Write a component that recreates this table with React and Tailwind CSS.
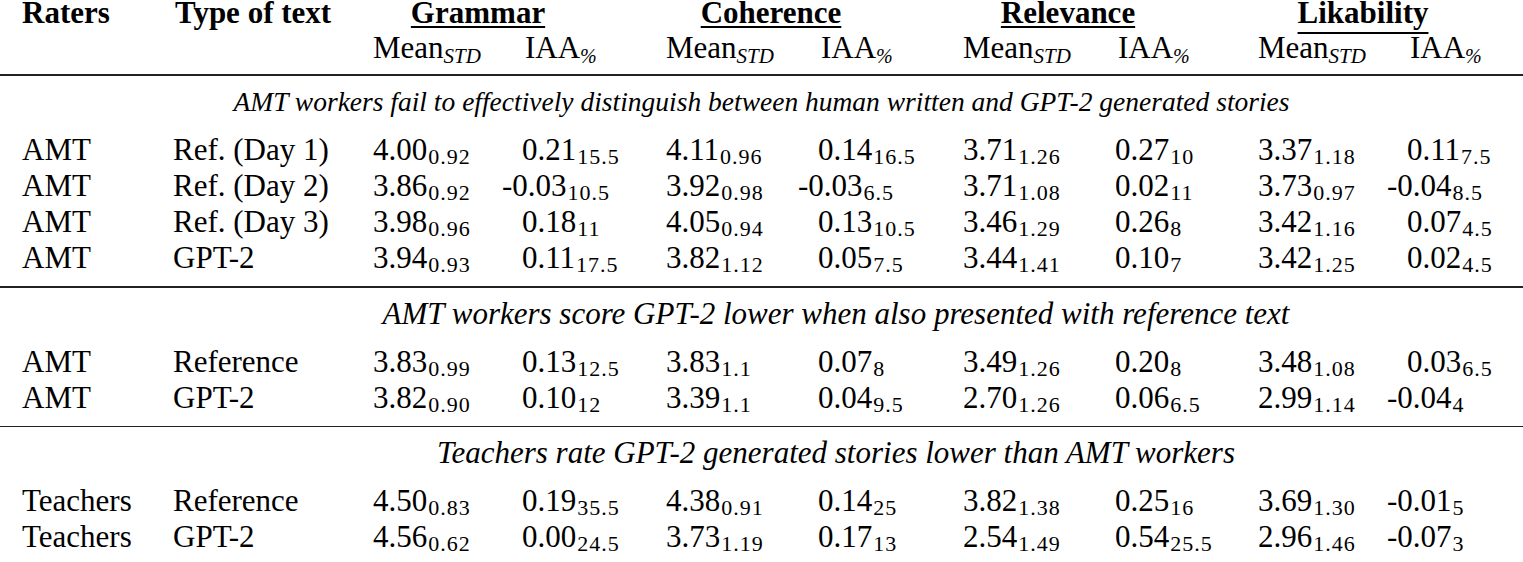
import React from 'react';

const cols = 'grid grid-cols-[173px_200px_149px_144px_152px_145px_152px_143px_149px_116px]';

const groups = ['Grammar', 'Coherence', 'Relevance', 'Likability'];

const sections = [
  {
    caption: 'AMT workers fail to effectively distinguish between human written and GPT-2 generated stories',
    capCls: 'text-[27.5px]',
    rows: [
      ['AMT', 'Ref. (Day 1)', ['4.00', '0.92'], ['0.21', '15.5'], ['4.11', '0.96'], ['0.14', '16.5'], ['3.71', '1.26'], ['0.27', '10'], ['3.37', '1.18'], ['0.11', '7.5']],
      ['AMT', 'Ref. (Day 2)', ['3.86', '0.92'], ['-0.03', '10.5'], ['3.92', '0.98'], ['-0.03', '6.5'], ['3.71', '1.08'], ['0.02', '11'], ['3.73', '0.97'], ['-0.04', '8.5']],
      ['AMT', 'Ref. (Day 3)', ['3.98', '0.96'], ['0.18', '11'], ['4.05', '0.94'], ['0.13', '10.5'], ['3.46', '1.29'], ['0.26', '8'], ['3.42', '1.16'], ['0.07', '4.5']],
      ['AMT', 'GPT-2', ['3.94', '0.93'], ['0.11', '17.5'], ['3.82', '1.12'], ['0.05', '7.5'], ['3.44', '1.41'], ['0.10', '7'], ['3.42', '1.25'], ['0.02', '4.5']],
    ],
  },
  {
    caption: 'AMT workers score GPT-2 lower when also presented with reference text',
    capCls: 'pl-[149px]',
    rows: [
      ['AMT', 'Reference', ['3.83', '0.99'], ['0.13', '12.5'], ['3.83', '1.1'], ['0.07', '8'], ['3.49', '1.26'], ['0.20', '8'], ['3.48', '1.08'], ['0.03', '6.5']],
      ['AMT', 'GPT-2', ['3.82', '0.90'], ['0.10', '12'], ['3.39', '1.1'], ['0.04', '9.5'], ['2.70', '1.26'], ['0.06', '6.5'], ['2.99', '1.14'], ['-0.04', '4']],
    ],
  },
  {
    caption: 'Teachers rate GPT-2 generated stories lower than AMT workers',
    capCls: 'pl-[149px]',
    rows: [
      ['Teachers', 'Reference', ['4.50', '0.83'], ['0.19', '35.5'], ['4.38', '0.91'], ['0.14', '25'], ['3.82', '1.38'], ['0.25', '16'], ['3.69', '1.30'], ['-0.01', '5']],
      ['Teachers', 'GPT-2', ['4.56', '0.62'], ['0.00', '24.5'], ['3.73', '1.19'], ['0.17', '13'], ['2.54', '1.49'], ['0.54', '25.5'], ['2.96', '1.46'], ['-0.07', '3']],
    ],
  },
];

function Val({ v }) {
  const neg = v[0].startsWith('-');
  return (
    <div className={neg ? '-ml-[20px]' : ''}>
      {v[0]}
      <span className="ml-[1px] text-[22px] tracking-[1px] leading-none align-[-4px]">{v[1]}</span>
    </div>
  );
}

function Section({ s, last }) {
  return (
    <div>
      <div className={`pt-[8px] text-center italic ${s.capCls}`}>{s.caption}</div>
      <div className="pt-[13px] pb-[10px]">
        {s.rows.map((r, i) => (
          <div key={i} className={cols}>
            <div className="pl-[22px]">{r[0]}</div>
            <div>{r[1]}</div>
            {r.slice(2).map((v, j) => (
              <Val key={j} v={v} />
            ))}
          </div>
        ))}
      </div>
      <div className={last ? 'h-[3px] bg-black' : 'h-[1.5px] bg-[#222]'} />
    </div>
  );
}

export default function App() {
  return (
    <div className="w-[1523px] h-[562px] bg-white text-black text-[31px] leading-[35px] font-[family-name:Liberation_Serif,serif] overflow-hidden">
      {/* header */}
      <div className={`${cols} h-[28px] leading-[26px] font-bold`}>
        <div className="pl-[22px]">Raters</div>
        <div className="pl-[2px]">Type of text</div>
        {groups.map((g) => (
          <div key={g} className="col-span-2">
            <div className="w-[210px] text-center">
              <span
                className={`underline decoration-[1.5px] [text-decoration-skip-ink:none] ${
                  g === 'Likability' ? 'underline-offset-[9px]' : 'underline-offset-[3px]'
                }`}
              >
                {g}
              </span>
            </div>
          </div>
        ))}
      </div>
      <div className={`${cols} h-[46px] leading-[40px]`}>
        <div />
        <div />
        {groups.map((g) => (
          <React.Fragment key={g}>
            <div>
              Mean<span className="text-[21px] italic leading-none align-[-5px]">STD</span>
            </div>
            <div className="pl-[3px]">
              IAA<span className="text-[20px] italic leading-none align-[-5px]">%</span>
            </div>
          </React.Fragment>
        ))}
      </div>
      <div className="h-[2px] bg-[#222]" />
      {sections.map((s, i) => (
        <Section key={i} s={s} last={i === sections.length - 1} />
      ))}
    </div>
  );
}
